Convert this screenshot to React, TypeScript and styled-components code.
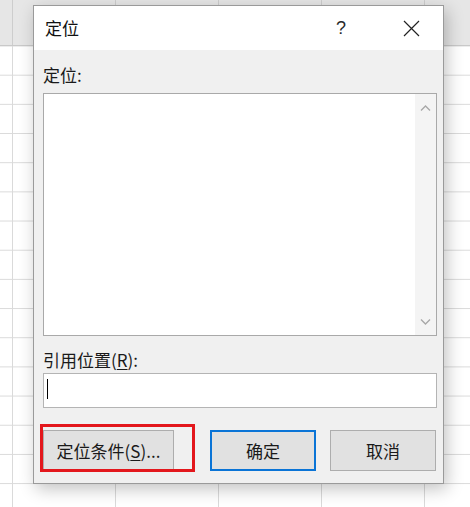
import React from "react";
import styled, { createGlobalStyle } from "styled-components";

const GlobalStyle = createGlobalStyle`
  html, body { margin: 0; padding: 0; background: #fff; }
  body { font-family: "Noto Sans CJK SC", "Microsoft YaHei", sans-serif; color: #1a1a1a; }
  *, *::before, *::after { box-sizing: border-box; }
`;

const Sheet = styled.div`
  position: relative;
  width: 470px;
  height: 507px;
  overflow: hidden;
  background: #fff;
  display: flex;
  flex-direction: column;
`;

const ColumnHeader = styled.div`
  height: 46px;
  flex: none;
  background: #e6e6e6 linear-gradient(to right, #cdcdcd 1px, transparent 1px) 12px 0 / 103px 100% repeat-x;
  border-bottom: 1px solid #c9c9c9;
`;

const Cells = styled.div`
  flex: 1;
  background-image: linear-gradient(to right, #dadada 1px, transparent 1px),
    linear-gradient(to bottom, #dadada 1px, transparent 1px);
  background-size: 103px 100%, 100% 29.18px;
  background-position: 12px 0, 0 28.7px;
`;

const Dialog = styled.div`
  position: absolute;
  left: 33px;
  top: 5px;
  width: 411px;
  height: 479px;
  border: 1px solid #9a9a9a;
  background: #f0f0f0;
  box-shadow: 3px 5px 16px rgba(0, 0, 0, 0.24);
  display: flex;
  flex-direction: column;
`;

const TitleBar = styled.div`
  height: 44px;
  flex: none;
  background: #fff;
  display: flex;
  align-items: center;
  gap: 9px;
  padding: 0 1px 0 11px;
`;

const Title = styled.div`
  flex: 1;
  font-size: 17px;
  line-height: 22px;
  color: #111;
`;

const TitleButton = styled.div<{ $w: number }>`
  width: ${(p) => p.$w}px;
  height: 44px;
  display: flex;
  align-items: center;
  justify-content: center;
  font-family: "Liberation Sans", "Noto Sans", sans-serif;
  font-size: 18px;
  color: #2a2a2a;
`;

const Body = styled.div`
  flex: 1;
  display: flex;
  flex-direction: column;
  padding: 14px 6px 11px 9px;
`;

const Label = styled.div<{ $gap: number }>`
  font-size: 17px;
  line-height: 22px;
  color: #1a1a1a;
  margin-bottom: ${(p) => p.$gap}px;
  u { text-underline-offset: 2px; }
`;

const ListBox = styled.div`
  height: 243px;
  border: 1px solid #a9a9a9;
  background: #fff;
  display: flex;
  margin-bottom: 13px;
`;

const ListItems = styled.div`
  flex: 1;
`;

const ScrollBar = styled.div`
  width: 21px;
  background: #f4f4f4;
  display: flex;
  flex-direction: column;
  justify-content: space-between;
  align-items: center;
  padding: 10px 0 9px;
`;

const Chevron = styled.svg`
  width: 11px;
  height: 8px;
  display: block;
`;

const TextInput = styled.div`
  height: 35px;
  border: 1px solid #b4b4b4;
  background: #fff;
  display: flex;
  align-items: center;
  padding-left: 3px;
`;

const Caret = styled.span`
  width: 1px;
  height: 20px;
  background: #000;
  margin-top: -3px;
`;

const ButtonRow = styled.div`
  display: flex;
  margin-top: 22px;
  gap: 14px;
`;

const Highlighted = styled.div`
  position: relative;
  margin-right: 22px;
`;

const RedFrame = styled.div`
  position: absolute;
  left: -3px;
  top: -6px;
  width: 155px;
  height: 48px;
  border: 3px solid #e3171c;
  pointer-events: none;
`;

const Button = styled.button<{ $w: number; $default?: boolean }>`
  width: ${(p) => p.$w}px;
  height: 41px;
  background: #e1e1e1;
  border: ${(p) => (p.$default ? "2px solid #0a74d6" : "1px solid #adadad")};
  font-family: "Noto Sans CJK SC", "Microsoft YaHei", sans-serif;
  font-size: 17px;
  line-height: 22px;
  color: #1a1a1a;
  padding: 0;
  display: flex;
  align-items: center;
  justify-content: center;
  u { text-underline-offset: 2px; }
`;

export default function App() {
  return (
    <>
      <GlobalStyle />
      <Sheet>
        <ColumnHeader />
        <Cells />
        <Dialog>
          <TitleBar>
            <Title>定位</Title>
            <TitleButton $w={60}>?</TitleButton>
            <TitleButton $w={62}>
              <svg width="17" height="17" viewBox="0 0 17 17">
                <path d="M1 1 L16 16 M16 1 L1 16" stroke="#222" strokeWidth="1.2" fill="none" />
              </svg>
            </TitleButton>
          </TitleBar>
          <Body>
            <Label $gap={7}>定位:</Label>
            <ListBox>
              <ListItems />
              <ScrollBar>
                <Chevron viewBox="0 0 11 8">
                  <path d="M1 6.5 L5.5 2 L10 6.5" stroke="#a8a8a8" strokeWidth="1.4" fill="none" />
                </Chevron>
                <Chevron viewBox="0 0 11 8">
                  <path d="M1 1.5 L5.5 6 L10 1.5" stroke="#a8a8a8" strokeWidth="1.4" fill="none" />
                </Chevron>
              </ScrollBar>
            </ListBox>
            <Label $gap={2}>
              引用位置(<u>R</u>):
            </Label>
            <TextInput>
              <Caret />
            </TextInput>
            <ButtonRow>
              <Highlighted>
                <Button $w={131}>
                  定位条件(<u>S</u>)...
                </Button>
                <RedFrame />
              </Highlighted>
              <Button $w={106} $default>
                确定
              </Button>
              <Button $w={106}>取消</Button>
            </ButtonRow>
          </Body>
        </Dialog>
      </Sheet>
    </>
  );
}
